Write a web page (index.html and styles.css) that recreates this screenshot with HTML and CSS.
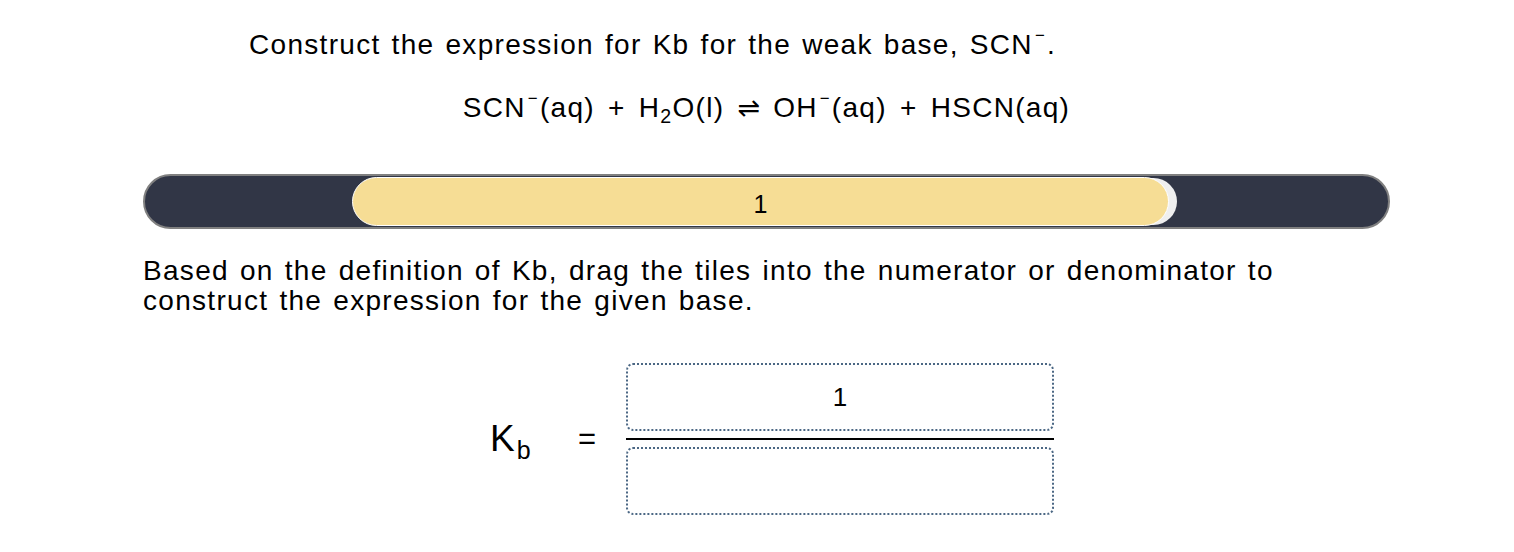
FILE: index.html
```html
<!DOCTYPE html>
<html>
<head>
    <title>Kb Expression</title>
    <link rel="stylesheet" href="styles.css">
</head>
<body>
    <div class="question">
        <p class="prompt">Construct the expression for Kb for the weak base, SCN<sup>&minus;</sup>.</p>
        <p class="reaction">SCN<sup>&minus;</sup>(aq) + H<sub>2</sub>O(l) <span class="arrows">&#8652;</span> OH<sup>&minus;</sup>(aq) + HSCN(aq)</p>

        <!-- tile tray -->
        <div class="tray">
            <div class="tile">1</div>
        </div>

        <p class="instructions">Based on the definition of Kb, drag the tiles into the numerator or denominator to construct the expression for the given base.</p>

        <div class="expression">
            <div class="kb">K<sub>b</sub></div>
            <div class="equals">=</div>
            <div class="fraction">
                <div class="drop">1</div>
                <div class="fraction-bar"></div>
                <div class="drop"></div>
            </div>
        </div>
    </div>
</body>
</html>
```

FILE: styles.css
```css
body {
    margin: 0;
    font-family: "Liberation Sans", Arial, sans-serif;
    color: #000;
    background: #fff;
}

.question {
    width: 1247px;
    padding: 0 0 0 143px;
}

p {
    margin: 0;
    font-size: 28px;
    line-height: 30px;
    letter-spacing: 1.3px;
    word-spacing: 2px;
}

sup {
    font-size: 60%;
    vertical-align: 0;
    position: relative;
    top: -0.8em;
    margin: 0 1px 0 2px;
}

sub {
    font-size: 70%;
    vertical-align: 0;
    position: relative;
    top: 0.3em;
}

.prompt {
    padding: 30px 0 0 106px;
}

.reaction {
    margin-top: 29px;
    text-align: center;
    word-spacing: 4px;
}

.arrows {
    font-family: "DejaVu Sans", sans-serif;
    font-size: 27px;
    letter-spacing: 0;
}

.tray {
    margin-top: 47px;
    height: 51px;
    border: 2px solid #808080;
    border-radius: 28px;
    background-color: #313646;
    padding: 0 0 0 207px;
    display: flex;
    align-items: center;
}

.tile {
    width: 817px;
    height: 49px;
    box-sizing: border-box;
    padding-top: 5px;
    border: 1px solid #fff;
    border-radius: 25px;
    background-color: #f6dd95;
    box-shadow: 9px 0 0 -1px #efefef;
    font-size: 25px;
    display: flex;
    align-items: center;
    justify-content: center;
}

.instructions {
    margin-top: 27px;
    width: 1150px;
}

.expression {
    margin-top: 47px;
    display: flex;
    align-items: center;
}

.kb {
    margin-left: 347px;
    width: 88px;
    font-size: 37px;
    letter-spacing: 2px;
}

.kb sub {
    font-size: 25px;
    top: 0.3em;
}

.equals {
    width: 48px;
    font-size: 31px;
}

.fraction {
    width: 428px;
}

.drop {
    height: 68px;
    box-sizing: border-box;
    padding-top: 17px;
    border: 2px dotted #4b6784;
    border-radius: 7px;
    font-size: 26px;
    display: flex;
    justify-content: center;
}

.fraction-bar {
    height: 2px;
    background: #000;
    margin: 7px 0;
}
```
